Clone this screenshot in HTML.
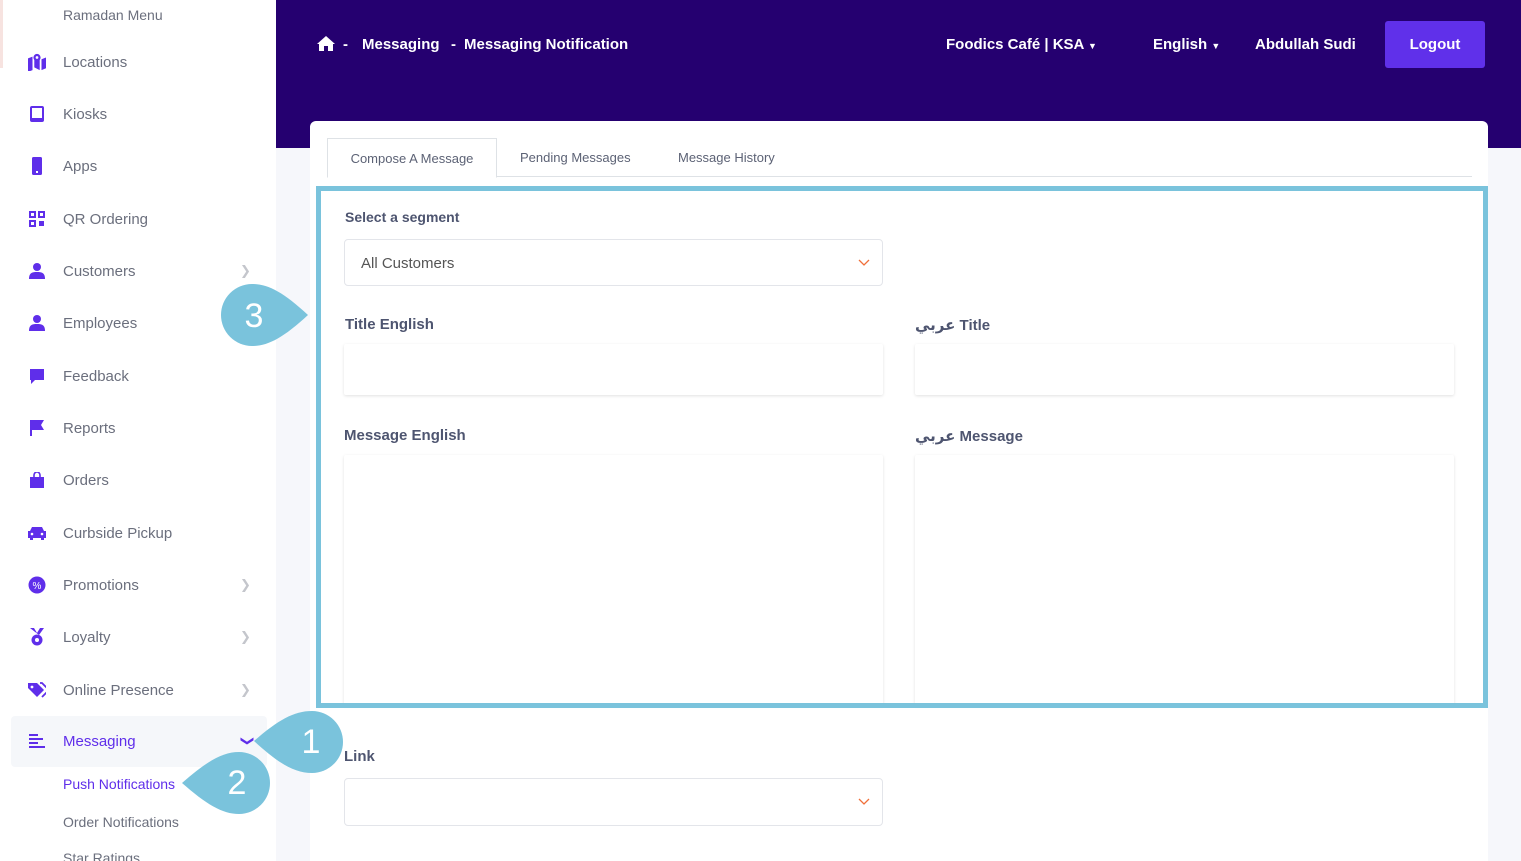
<!DOCTYPE html>
<html><head><meta charset="utf-8"><style>
*{box-sizing:border-box;margin:0;padding:0}
html,body{width:1521px;height:861px;overflow:hidden}
body{position:relative;background:#f6f7fb;font-family:"Liberation Sans","DejaVu Sans",sans-serif}
.side{position:absolute;left:0;top:0;width:276px;height:861px;background:#fff}
.item{position:absolute;left:0;width:276px;height:40px;display:flex;align-items:center;font-size:15px;color:#6b6f7d}
.item .ic{position:absolute;left:28px;width:18px;height:18px;display:flex;align-items:center;justify-content:center}
.item .t{position:absolute;left:63px}
.item .ch{position:absolute;left:240px;color:#c4c6cc;font-size:13px}
.sub{position:absolute;left:63px;font-size:14px;color:#6b6f7d}
.hdr{position:absolute;left:276px;top:0;width:1245px;height:148px;background:#250070}
.wt{position:absolute;color:#fff;font-weight:bold;font-size:15px;top:36px}
.card{position:absolute;left:310px;top:121px;width:1178px;height:740px;background:#fff;border-radius:6px 6px 0 0}
.tabs{position:absolute;left:327px;top:138px;width:1145px;height:39px;border-bottom:1px solid #dee2e6}
.tab{position:absolute;top:0;height:39px;font-size:13px;color:#5c6275;line-height:39px}
.lbl{position:absolute;font-size:15px;font-weight:bold;color:#4e5570}
.inp{position:absolute;background:#fff;box-shadow:0 1px 3px rgba(0,0,0,.12);border-radius:2px}
.sel{position:absolute;background:#fff;border:1px solid #e3e5ea;border-radius:4px;font-size:15px;color:#555}
.frame{position:absolute;left:316px;top:186px;width:1172px;height:522px;border:5px solid #7ac3dc}
</style></head><body>
<div class="side">
<div style="position:absolute;left:0;top:0;width:3px;height:68px;background:#f7e3e0"></div>
<div class="sub" style="top:7px">Ramadan Menu</div>
<div class="item" style="top:42px"><span class="ic"><svg width="20" height="18" viewBox="0 0 20 18"><path d="M0 5l5-2v15l-5 2zM7 3l6 3v12l-6-3zM15 6l5-2v12l-5 2z" fill="#5f2eea"/><circle cx="10" cy="4" r="4" fill="#5f2eea"/><circle cx="10" cy="4" r="1.5" fill="#fff"/></svg></span><span class="t">Locations</span></div>
<div class="item" style="top:94px"><span class="ic"><svg width="16" height="18"><rect x="1" y="1" width="14" height="16" rx="2" fill="#5f2eea"/><rect x="3" y="3" width="10" height="10" fill="#fff"/></svg></span><span class="t">Kiosks</span></div>
<div class="item" style="top:146px"><span class="ic"><svg width="12" height="18"><rect x="1" y="0" width="10" height="18" rx="1.5" fill="#5f2eea"/><rect x="5" y="14" width="2" height="2" fill="#fff"/></svg></span><span class="t">Apps</span></div>
<div class="item" style="top:199px"><span class="ic"><svg width="16" height="16"><g fill="none" stroke="#5f2eea" stroke-width="2"><rect x="1" y="1" width="5" height="5"/><rect x="10" y="1" width="5" height="5"/><rect x="1" y="10" width="5" height="5"/></g><rect x="10" y="10" width="5" height="5" fill="#5f2eea"/></svg></span><span class="t">QR Ordering</span></div>
<div class="item" style="top:251px"><span class="ic"><svg width="16" height="16"><circle cx="8" cy="4" r="4" fill="#5f2eea"/><path d="M0 16c0-6 3-7 8-7s8 1 8 7z" fill="#5f2eea"/></svg></span><span class="t">Customers</span><span class="ch">&#10095;</span></div>
<div class="item" style="top:303px"><span class="ic"><svg width="16" height="16"><circle cx="8" cy="4" r="4" fill="#5f2eea"/><path d="M0 16c0-6 3-7 8-7s8 1 8 7z" fill="#5f2eea"/></svg></span><span class="t">Employees</span></div>
<div class="item" style="top:356px"><span class="ic"><svg width="16" height="16"><path d="M1 1h14v11H6l-4 4v-4H1z" fill="#5f2eea"/></svg></span><span class="t">Feedback</span></div>
<div class="item" style="top:408px"><span class="ic"><svg width="16" height="16"><path d="M1 0v16h2V10h12L12 5l3-5z" fill="#5f2eea"/></svg></span><span class="t">Reports</span></div>
<div class="item" style="top:460px"><span class="ic"><svg width="16" height="16"><path d="M1 5h14v11H1z" fill="#5f2eea"/><path d="M5 6V3a3 3 0 016 0v3" fill="none" stroke="#5f2eea" stroke-width="1.6"/></svg></span><span class="t">Orders</span></div>
<div class="item" style="top:513px"><span class="ic"><svg width="18" height="14"><path d="M2 5l2-4h10l2 4h2v7h-2v2h-3v-2H5v2H2v-2H0V5z" fill="#5f2eea"/><circle cx="4" cy="8" r="1.3" fill="#fff"/><circle cx="14" cy="8" r="1.3" fill="#fff"/></svg></span><span class="t">Curbside Pickup</span></div>
<div class="item" style="top:565px"><span class="ic"><svg width="18" height="18"><circle cx="9" cy="9" r="8.5" fill="#5f2eea"/><text x="9" y="13" font-size="10" fill="#fff" text-anchor="middle" font-family="Liberation Sans">%</text></svg></span><span class="t">Promotions</span><span class="ch">&#10095;</span></div>
<div class="item" style="top:617px"><span class="ic"><svg width="16" height="18"><path d="M1 0h4l3 5 3-5h4l-5 7z" fill="#5f2eea"/><circle cx="8" cy="12" r="5.5" fill="#5f2eea"/><circle cx="8" cy="12" r="2" fill="#fff"/></svg></span><span class="t">Loyalty</span><span class="ch">&#10095;</span></div>
<div class="item" style="top:670px"><span class="ic"><svg width="22" height="16"><path d="M0 1h9l7 7-7 7-9-9z" fill="#5f2eea"/><path d="M12 1h2l7 7-7 7" fill="none" stroke="#5f2eea" stroke-width="1.8"/><circle cx="4" cy="5" r="1.4" fill="#fff"/></svg></span><span class="t">Online Presence</span><span class="ch">&#10095;</span></div>
<div style="position:absolute;left:11px;top:716px;width:256px;height:51px;background:#f5f7fa;border-radius:4px"></div>
<div class="item" style="top:721px"><span class="ic"><svg width="16" height="14"><g fill="#5f2eea"><rect y="0" width="9" height="2"/><rect y="4" width="14" height="2"/><rect y="8" width="9" height="2"/><rect y="12" width="16" height="2"/></g></svg></span><span class="t" style="color:#5f2eea">Messaging</span><span class="ch" style="color:#5f2eea;transform:rotate(90deg);left:242px">&#10095;</span></div>
<div class="sub" style="top:776px;color:#5f2eea">Push Notifications</div>
<div class="sub" style="top:814px">Order Notifications</div>
<div class="sub" style="top:850px">Star Ratings</div>
</div>
<div class="hdr"></div>
<svg style="position:absolute;left:317px;top:36px" width="18" height="15" viewBox="0 0 18 15"><path d="M9 0L0 8h2v7h5v-5h4v5h5V8h2z" fill="#fff"/></svg>
<div class="wt" style="left:343px">-</div>
<div class="wt" style="left:362px">Messaging</div>
<div class="wt" style="left:451px">-</div>
<div class="wt" style="left:464px">Messaging Notification</div>
<div class="wt" style="left:946px">Foodics Café | KSA <span style="font-size:9px">&#9660;</span></div>
<div class="wt" style="left:1153px">English <span style="font-size:9px">&#9660;</span></div>
<div class="wt" style="left:1255px">Abdullah Sudi</div>
<div style="position:absolute;left:1385px;top:21px;width:100px;height:47px;background:#6030ea;border-radius:3px;color:#fff;font-weight:bold;font-size:15px;text-align:center;line-height:47px">Logout</div>
<div class="card"></div>
<div class="tabs">
<div class="tab" style="left:0;width:170px;border:1px solid #dee2e6;border-bottom:1px solid #fff;background:#fff;text-align:center;height:40px">Compose A Message</div>
<div class="tab" style="left:193px">Pending Messages</div>
<div class="tab" style="left:351px">Message History</div>
</div>
<div class="lbl" style="left:345px;top:209px;font-size:14px">Select a segment</div>
<div class="sel" style="left:344px;top:239px;width:539px;height:47px;padding:15px 16px">All Customers<svg style="position:absolute;right:12px;top:19px" width="12" height="8"><path d="M1 1l5 5 5-5" fill="none" stroke="#f0703a" stroke-width="1.3"/></svg></div>
<div class="lbl" style="left:345px;top:316px">Title English</div>
<div class="lbl" style="left:915px;top:316px">عربي Title</div>
<div class="inp" style="left:344px;top:344px;width:539px;height:51px"></div>
<div class="inp" style="left:915px;top:344px;width:539px;height:51px"></div>
<div class="lbl" style="left:344px;top:427px">Message English</div>
<div class="lbl" style="left:915px;top:427px">عربي Message</div>
<div class="inp" style="left:344px;top:455px;width:539px;height:250px"></div>
<div class="inp" style="left:915px;top:455px;width:539px;height:250px"></div>
<div class="frame"></div>
<div class="lbl" style="left:344px;top:748px">Link</div>
<div class="sel" style="left:344px;top:778px;width:539px;height:48px"><svg style="position:absolute;right:12px;top:19px" width="12" height="8"><path d="M1 1l5 5 5-5" fill="none" stroke="#f0703a" stroke-width="1.3"/></svg></div>
<svg style="position:absolute;left:0;top:0" width="1521" height="861">
<g fill="#7ac3dc">
<path d="M308 315 C283 292 268 284 252 284 A31 31 0 0 0 252 346 C268 346 283 338 308 315z"/>
<path d="M254 741 C278 720 294 711 312 711 A31 31 0 0 1 312 773 C294 773 278 763 254 741z"/>
<path d="M182 783 C206 762 222 752 239 752 A31 31 0 0 1 239 814 C222 814 206 804 182 783z"/>
</g>
<g fill="#fff" font-family="Liberation Sans" font-size="34" text-anchor="middle">
<text x="254" y="327">3</text><text x="311" y="753">1</text><text x="237" y="794">2</text>
</g>
</svg>
</body></html>
